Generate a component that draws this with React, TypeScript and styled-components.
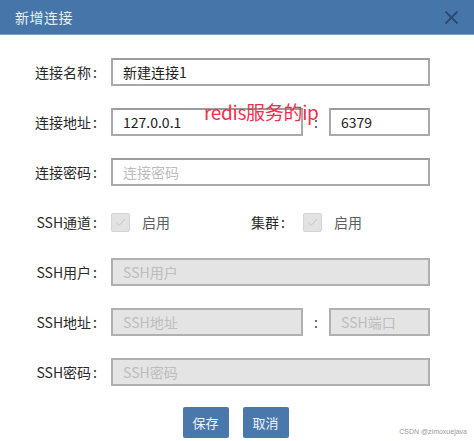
import React from "react";
import styled, { createGlobalStyle } from "styled-components";

const GlobalStyle = createGlobalStyle`
  html, body {
    margin: 0;
    padding: 0;
    background: #ffffff;
  }
  body {
    font-family: "Noto Sans CJK SC", "Noto Sans", sans-serif;
  }
`;

const Dialog = styled.div`
  position: relative;
  width: 474px;
  height: 441px;
  background: #fff;
  overflow: hidden;
`;

const Header = styled.div`
  height: 34px;
  background: #4676a9;
  border-bottom: 1px solid #7d9fc4;
  display: flex;
  align-items: center;
  justify-content: space-between;
  padding: 0 15px 0 15px;
`;

const Title = styled.span`
  color: #e8eef6;
  font-size: 14px;
  letter-spacing: 0.5px;
`;

const Close = styled.button`
  border: none;
  background: none;
  padding: 0;
  width: 16px;
  height: 16px;
  display: flex;
  align-items: center;
  justify-content: center;
`;

const Body = styled.div`
  padding-top: 23px;
  display: flex;
  flex-direction: column;
  gap: 22px;
`;

const Row = styled.div`
  display: grid;
  grid-template-columns: 111px 192px 26px 101px;
  align-items: center;
  height: 28px;
`;

const LabelCell = styled.div`
  grid-column: 1;
  padding-right: 14px;
  font-size: 14px;
  color: #2a2a2a;
  text-align: right;
  white-space: nowrap;
`;

const Colon = styled.span`
  margin-left: 2px;
`;

const Input = styled.input<{ wide?: boolean; port?: boolean }>`
  box-sizing: border-box;
  height: 28px;
  width: 100%;
  grid-column: ${(p) => (p.wide ? "2 / 5" : p.port ? "4" : "2")};
  border: 2px solid #a9a9a9;
  border-top-color: #9c9c9c;
  padding: 0 10px;
  font-family: "Noto Sans CJK SC", "Noto Sans", sans-serif;
  font-size: 14px;
  color: #222;
  background: #fff;
  outline: none;

  &::placeholder {
    color: #bdbdbd;
  }

  &:disabled {
    background: #e4e4e4;
    border-color: #b0b0b0;
  }
`;

const Sep = styled.span`
  grid-column: 3;
  text-align: center;
  font-size: 14px;
  color: #444;
`;

const CheckGroup = styled.div`
  display: flex;
  align-items: center;
  gap: 12px;
  font-size: 14px;
  color: #5e5e5e;
`;

const Box = styled.span`
  box-sizing: border-box;
  width: 19px;
  height: 19px;
  background: #e2e2e2;
  border: 1px solid #d4d4d4;
  border-radius: 2px;
  display: flex;
  align-items: center;
  justify-content: center;
`;

const SideWrap = styled.div<{ span?: string }>`
  grid-column: ${(p) => p.span ?? "2"};
  position: relative;
  display: flex;
  align-items: center;
  height: 100%;
`;

const SideLabel = styled.span`
  position: absolute;
  right: 18px;
  font-size: 14px;
  color: #2a2a2a;
`;

const Footer = styled.div`
  display: flex;
  justify-content: center;
  gap: 14px;
  margin-top: -1px;
  padding-right: 3px;
`;

const Button = styled.button`
  width: 46px;
  height: 31px;
  border: none;
  border-radius: 2px;
  background: #4a78ad;
  color: #eef3f9;
  font-family: "Noto Sans CJK SC", "Noto Sans", sans-serif;
  font-size: 13px;
  padding: 0;
`;

const Note = styled.span`
  position: absolute;
  left: 204px;
  top: 98px;
  font-size: 19px;
  color: #f0304b;
  letter-spacing: -0.3px;
`;

const Mark = styled.span`
  position: absolute;
  right: 7px;
  bottom: 6px;
  font-family: "Liberation Sans", sans-serif;
  font-size: 7px;
  color: #9a9a9a;
`;

const Check = () => (
  <Box>
    <svg width="11" height="9" viewBox="0 0 11 9">
      <path d="M1 4.5 L4 7.5 L10 1" fill="none" stroke="#c8c8c8" strokeWidth="1" />
    </svg>
  </Box>
);

const Label = ({ text }: { text: string }) => (
  <LabelCell>
    {text}
    <Colon>:</Colon>
  </LabelCell>
);

export default function App() {
  return (
    <Dialog>
      <GlobalStyle />
      <Header>
        <Title>新增连接</Title>
        <Close>
          <svg width="15" height="15" viewBox="0 0 15 15">
            <path d="M1.5 1.5 L13.5 13.5 M13.5 1.5 L1.5 13.5" stroke="#2b4a70" strokeWidth="1.8" />
          </svg>
        </Close>
      </Header>
      <Body>
        <Row>
          <Label text="连接名称" />
          <Input wide defaultValue="新建连接1" />
        </Row>
        <Row>
          <Label text="连接地址" />
          <Input defaultValue="127.0.0.1" />
          <Sep>:</Sep>
          <Input port defaultValue="6379" />
        </Row>
        <Row>
          <Label text="连接密码" />
          <Input wide placeholder="连接密码" />
        </Row>
        <Row>
          <Label text="SSH通道" />
          <SideWrap>
            <CheckGroup>
              <Check />
              启用
            </CheckGroup>
            <SideLabel>
              集群<Colon>:</Colon>
            </SideLabel>
          </SideWrap>
          <SideWrap span="3 / 5">
            <CheckGroup>
              <Check />
              启用
            </CheckGroup>
          </SideWrap>
        </Row>
        <Row>
          <Label text="SSH用户" />
          <Input wide disabled placeholder="SSH用户" />
        </Row>
        <Row>
          <Label text="SSH地址" />
          <Input disabled placeholder="SSH地址" />
          <Sep>:</Sep>
          <Input port disabled placeholder="SSH端口" />
        </Row>
        <Row>
          <Label text="SSH密码" />
          <Input wide disabled placeholder="SSH密码" />
        </Row>
        <Footer>
          <Button>保存</Button>
          <Button>取消</Button>
        </Footer>
      </Body>
      <Note>redis服务的ip</Note>
      <Mark>CSDN @zimoxuejava</Mark>
    </Dialog>
  );
}
